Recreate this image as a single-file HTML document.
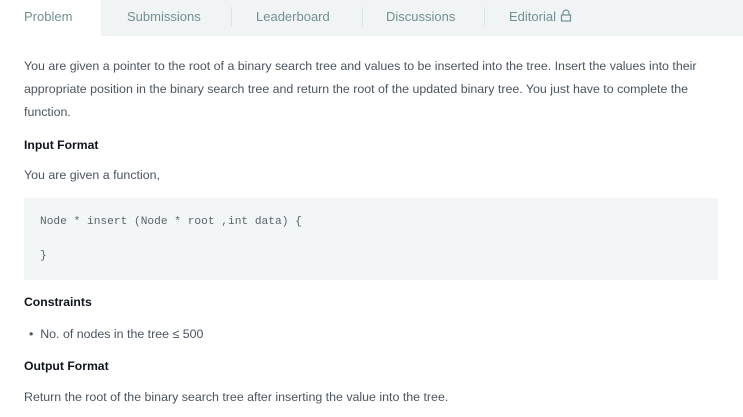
<!DOCTYPE html>
<html><head><style>
body{margin:0;width:743px;height:417px;background:#fff;font-family:"Liberation Sans",sans-serif;color:#39424e;overflow:hidden;position:relative}
.bar{position:absolute;left:0;top:0;width:743px;height:36px;background:#f0f4f5}
.tab{position:absolute;top:9px;font-size:13px;color:#738f93;white-space:nowrap}
.sep{position:absolute;top:7px;width:1px;height:19px;background:#dde3e5}
.t{position:absolute;left:24px;font-size:12.4px;white-space:nowrap;color:#4a5560}
.h{position:absolute;left:24px;font-size:12.2px;font-weight:bold;color:#0e141e}
.code{position:absolute;left:24px;top:198px;width:694px;height:82px;background:#f3f6f7}
.mono{position:absolute;font-family:"Liberation Mono",monospace;font-size:11.2px;color:#5a636d;white-space:pre}
</style></head><body>
<div class="bar"></div>
<div style="position:absolute;left:0;top:0;width:101px;height:37px;background:#fff"></div>
<div class="tab" style="left:24px">Problem</div>
<div class="tab" style="left:127px">Submissions</div>
<div class="sep" style="left:231px"></div>
<div class="tab" style="left:256px">Leaderboard</div>
<div class="sep" style="left:362px"></div>
<div class="tab" style="left:386px">Discussions</div>
<div class="sep" style="left:484px"></div>
<div class="tab" style="left:509px">Editorial <svg width="12" height="13" viewBox="0 0 12 13" style="vertical-align:-1px"><path d="M3 6V4a3 3 0 0 1 6 0v2" fill="none" stroke="#738f93" stroke-width="1.2"/><rect x="1.5" y="6" width="9" height="6" fill="none" stroke="#738f93" stroke-width="1.2"/></svg></div>
<div class="t" style="top:59px">You are given a pointer to the root of a binary search tree and values to be inserted into the tree. Insert the values into their</div>
<div class="t" style="top:82px">appropriate position in the binary search tree and return the root of the updated binary tree. You just have to complete the</div>
<div class="t" style="top:105px">function.</div>
<div class="h" style="top:138px">Input Format</div>
<div class="t" style="top:168px">You are given a function,</div>
<div class="code"></div>
<div class="mono" style="left:40px;top:216px">Node * insert (Node * root ,int data) {</div>
<div class="mono" style="left:40px;top:250px">}</div>
<div class="h" style="top:295px">Constraints</div>
<div class="t" style="top:327px;left:29px">•&nbsp; No. of nodes in the tree ≤ 500</div>
<div class="h" style="top:359px">Output Format</div>
<div class="t" style="top:390px">Return the root of the binary search tree after inserting the value into the tree.</div>
</body></html>
